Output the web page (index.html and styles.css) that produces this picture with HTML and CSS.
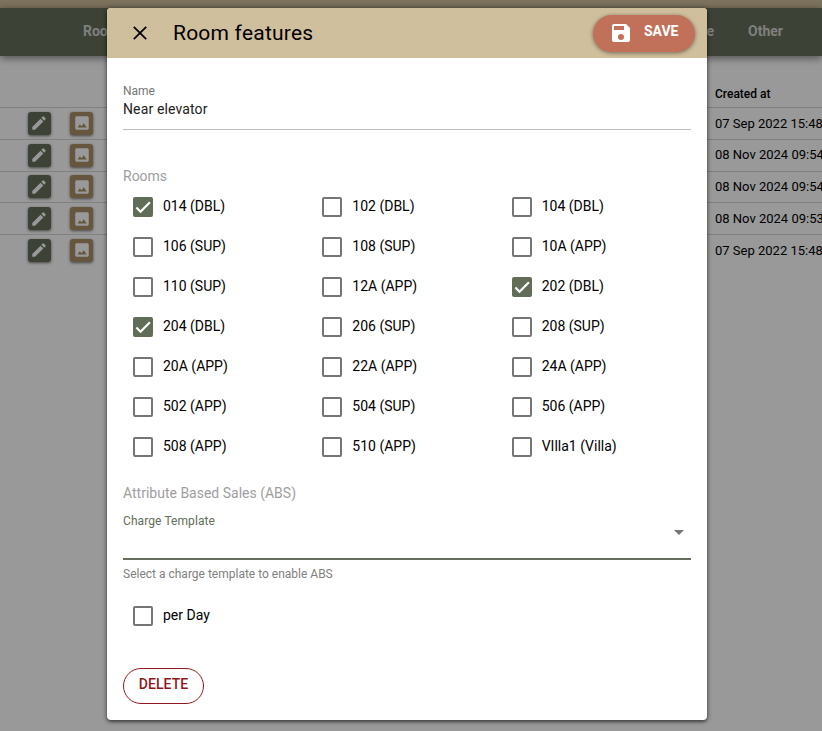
FILE: index.html
```html
<!DOCTYPE html>
<html lang="en">
<head>
<meta charset="utf-8">
<title>Room features</title>
<link rel="stylesheet" href="styles.css">
</head>
<body>
<svg class="sprite" aria-hidden="true">
  <symbol id="pencil" viewBox="0 0 24 24"><path d="M3 17.25V21h3.75L17.81 9.94l-3.75-3.75L3 17.25zM20.71 7.04a1 1 0 0 0 0-1.41l-2.34-2.34a1 1 0 0 0-1.41 0l-1.83 1.83 3.75 3.75 1.83-1.83z"/></symbol>
  <symbol id="image" viewBox="0 0 24 24"><path d="M21 19V5c0-1.100-.9-2-2-2H5c-1.100 0-2 .9-2 2v14c0 1.100.9 2 2 2h14c1.100 0 2-.9 2-2zM6 18l3-4.300 2.300 2.600 3-3.900L18.300 18z"/></symbol>
  <symbol id="check" viewBox="0 0 24 24"><path d="M4.100 12.700 9 17.600 20.300 6.300" fill="none" stroke="#fff" stroke-width="2.600"/></symbol>
</svg>
<div class="page">
  <div class="topbar"></div>
  <nav class="nav"><span class="nav-first">Rooms</span><span class="nav-mid">Rate</span><span>Other</span></nav>
  <div class="table">
    <div class="row head"><span class="created">Created at</span></div>
    <div class="row"><i class="act green"><svg><use href="#pencil"/></svg></i><i class="act tan"><svg><use href="#image"/></svg></i><span class="created">07 Sep 2022 15:48</span></div>
    <div class="row"><i class="act green"><svg><use href="#pencil"/></svg></i><i class="act tan"><svg><use href="#image"/></svg></i><span class="created">08 Nov 2024 09:54</span></div>
    <div class="row"><i class="act green"><svg><use href="#pencil"/></svg></i><i class="act tan"><svg><use href="#image"/></svg></i><span class="created">08 Nov 2024 09:54</span></div>
    <div class="row"><i class="act green"><svg><use href="#pencil"/></svg></i><i class="act tan"><svg><use href="#image"/></svg></i><span class="created">08 Nov 2024 09:53</span></div>
    <div class="row"><i class="act green"><svg><use href="#pencil"/></svg></i><i class="act tan"><svg><use href="#image"/></svg></i><span class="created">07 Sep 2022 15:48</span></div>
  </div>
</div>
<div class="backdrop">
  <section class="dialog">
    <header class="title-bar">
      <svg class="close" viewBox="0 0 14 14"><path d="M.8.8 13.200 13.200M13.200.8.8 13.200"/></svg>
      <h1>Room features</h1>
      <button class="save"><svg viewBox="0 0 24 24"><path fill-rule="evenodd" d="M17 3H5a2 2 0 0 0-2 2v14c0 1.100.9 2 2 2h14c1.100 0 2-.9 2-2V7l-4-4zM12 19a3 3 0 1 1 0-6 3 3 0 0 1 0 6zM15 9H5V5h10v4z"/></svg><span>SAVE</span></button>
    </header>
    <div class="body">
      <div class="field"><label>Name</label><div class="value">Near elevator</div></div>
      <h2 class="rooms-title">Rooms</h2>
      <div class="rooms">
        <div class="opt"><i class="box on"><svg><use href="#check"/></svg></i>014 (DBL)</div>
        <div class="opt"><i class="box"></i>102 (DBL)</div>
        <div class="opt"><i class="box"></i>104 (DBL)</div>
        <div class="opt"><i class="box"></i>106 (SUP)</div>
        <div class="opt"><i class="box"></i>108 (SUP)</div>
        <div class="opt"><i class="box"></i>10A (APP)</div>
        <div class="opt"><i class="box"></i>110 (SUP)</div>
        <div class="opt"><i class="box"></i>12A (APP)</div>
        <div class="opt"><i class="box on"><svg><use href="#check"/></svg></i>202 (DBL)</div>
        <div class="opt"><i class="box on"><svg><use href="#check"/></svg></i>204 (DBL)</div>
        <div class="opt"><i class="box"></i>206 (SUP)</div>
        <div class="opt"><i class="box"></i>208 (SUP)</div>
        <div class="opt"><i class="box"></i>20A (APP)</div>
        <div class="opt"><i class="box"></i>22A (APP)</div>
        <div class="opt"><i class="box"></i>24A (APP)</div>
        <div class="opt"><i class="box"></i>502 (APP)</div>
        <div class="opt"><i class="box"></i>504 (SUP)</div>
        <div class="opt"><i class="box"></i>506 (APP)</div>
        <div class="opt"><i class="box"></i>508 (APP)</div>
        <div class="opt"><i class="box"></i>510 (APP)</div>
        <div class="opt"><i class="box"></i>VIlla1 (Villa)</div>
      </div>
      <h2 class="abs-title">Attribute Based Sales (ABS)</h2>
      <div class="select"><label>Charge Template</label><svg class="arrow" viewBox="0 0 10 5"><path d="M0 0h10L5 5z"/></svg></div>
      <p class="hint">Select a charge template to enable ABS</p>
      <div class="opt per-day"><i class="box"></i>per Day</div>
      <button class="delete">DELETE</button>
    </div>
  </section>
</div>
</body>
</html>
```
FILE: styles.css
```css
* { box-sizing: border-box; }
body { margin: 0; font-family: Roboto, "Liberation Sans", sans-serif; color: #000; overflow: hidden; }
h1, h2, p { margin: 0; font-weight: 400; }
button { font-family: inherit; cursor: pointer; }
.sprite { display: none; }

.page { height: 731px; overflow: hidden; background: #fff; }
.topbar { height: 8px; background: #d0bf9c; }
.nav { height: 48px; display: flex; align-items: center; padding: 0 39px 2px 83px; background: #646e5a; box-shadow: 0 2px 8px rgba(0, 0, 0, .5); color: #d4d6d2; font-size: 14px; font-weight: 700; }
.nav-first { margin-right: auto; }
.nav-mid { margin-right: 34px; }
.table { padding-top: 24px; font-size: 13px; }
.row { height: 31.750px; display: flex; align-items: center; padding-left: 28px; border-top: 1px solid #d6d6d6; }
.row.head { height: 27px; border: 0; font-weight: 500; font-size: 12px; }
.created { width: 107px; margin-left: auto; margin-bottom: .6px; white-space: nowrap; }
.head .created { margin-bottom: 0; }
.act { width: 23px; height: 23px; display: grid; place-items: center; border-radius: 3px; box-shadow: 0 1px 3px rgba(0, 0, 0, .55); }
.act svg { width: 18px; height: 18px; fill: #fff; }
.green { margin-right: 19px; padding-right: 1px; background: #646e5a; }
.tan { background: #ab8f67; }

.backdrop { position: absolute; inset: 0; padding: 8px 0 0 107px; background: rgba(0, 0, 0, .4); }
.dialog { width: 600px; height: 712px; border-radius: 4px; overflow: hidden; background: #fff; box-shadow: 0 1px 5px rgba(0, 0, 0, .5), 0 2px 3px rgba(0, 0, 0, .3); }
.title-bar { height: 50px; display: flex; align-items: center; padding: 0 12px 0 26px; background: #d0bf9c; }
.close { width: 14px; height: 14px; stroke: #000; stroke-width: 1.800; fill: none; }
h1 { margin-left: 26px; font-size: 21px; letter-spacing: .22px; }
.save { width: 102px; height: 37px; margin-left: auto; display: flex; align-items: center; padding: 0 0 0 16px; border: 0; border-radius: 19px; background: #c17159; color: #fff; font-size: 14px; font-weight: 700; box-shadow: 0 1px 4px rgba(0, 0, 0, .45); }
.save svg { width: 24px; height: 24px; margin-right: 11px; fill: #fff; }
.save span { padding-bottom: 4px; }
.body { padding: 25px 16px 0; font-size: 14px; }
.field { height: 47px; border-bottom: 1px solid #bdbdbd; }
.field label { display: block; height: 16px; line-height: 16px; font-size: 12px; color: #757575; }
.value { line-height: 20px; letter-spacing: .13px; color: #212121; }
h2 { font-size: 14px; line-height: 20px; color: #9e9e9e; }
.rooms-title { margin-top: 36px; }
.rooms { display: grid; grid-template-columns: repeat(3, 189.330px); grid-auto-rows: 40px; }
.opt { height: 40px; display: flex; align-items: center; padding: 0 0 0 10px; line-height: 20px; }
.box { width: 20px; height: 20px; margin: 2px 10px 0 0; border: 2px solid #757575; border-radius: 2px; }
.box.on { border: 0; background: #626d57; }
.box svg { display: block; width: 20px; height: 20px; }
.abs-title { margin-top: 17px; }
.select { height: 49px; display: flex; justify-content: space-between; align-items: flex-start; padding: 2px 7px 0 0; margin-top: 8px; border-bottom: 2px solid #646e5a; }
.select label { line-height: 16px; font-size: 12px; letter-spacing: .09px; color: #626d57; }
.arrow { width: 10px; height: 5px; margin-top: 17px; fill: #757575; }
.hint { margin-top: 6px; line-height: 16px; font-size: 12px; color: #808080; }
.per-day { margin-top: 13px; }
.delete { width: 81px; height: 36px; display: block; margin-top: 33px; padding: 0 0 4px; border: 1px solid #8f1720; border-radius: 18px; background: #fff; color: #8f1720; font-size: 14px; font-weight: 500; letter-spacing: .08px; }
```
